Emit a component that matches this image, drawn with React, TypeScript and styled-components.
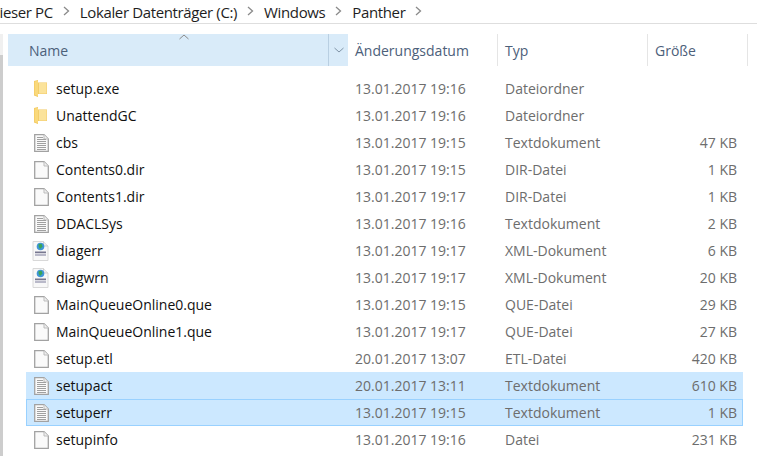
import React from 'react';
import styled, { createGlobalStyle } from 'styled-components';

const GlobalStyle = createGlobalStyle`
  html, body {
    margin: 0;
    padding: 0;
    background: #fff;
  }
  body {
    width: 757px;
    height: 456px;
    overflow: hidden;
    font-family: 'Open Sans', 'Noto Sans', sans-serif;
  }
`;

const Window = styled.div`
  width: 757px;
  height: 456px;
  overflow: hidden;
  display: flex;
  flex-direction: column;
`;

const Breadcrumb = styled.div`
  height: 23px;
  flex: none;
  border-bottom: 1px solid #dedede;
  display: flex;
  align-items: center;
  overflow: hidden;
  font-size: 15px;
  letter-spacing: -0.37px;
  color: #1e1e1e;
`;

const Crumb = styled.span<{ $offset?: number }>`
  white-space: nowrap;
  margin-left: ${(p) => p.$offset ?? 0}px;
`;

const Chevron = styled.svg`
  width: 7px;
  height: 10px;
  margin: 0 10px 2px 10px;
  flex: none;
`;

const Body = styled.div`
  flex: 1;
  display: flex;
  padding-top: 10px;
`;

const SideRail = styled.div`
  width: 3px;
  flex: none;
  margin-right: 5px;
  background: linear-gradient(#f0f0f0 0, #f0f0f0 21px, #cdcdcd 21px);
`;

const List = styled.div`
  flex: 1;
  min-width: 0;
`;

const HeaderRow = styled.div`
  height: 32px;
  display: flex;
  font-size: 14px;
  color: #4c607a;
`;

const NameHeader = styled.div`
  position: relative;
  width: 340px;
  flex: none;
  background: #d9ebf9;
  display: flex;
  align-items: center;
  padding-left: 21px;
  box-sizing: border-box;
`;

const SortCaret = styled.svg`
  position: absolute;
  left: 171px;
  top: 0;
  width: 10px;
  height: 6px;
`;

const DropZone = styled.div`
  position: absolute;
  right: 0;
  top: 0;
  bottom: 0;
  width: 19px;
  border-left: 1px solid #b9cfe2;
  display: flex;
  align-items: center;
  justify-content: center;
`;

const HeaderCell = styled.div<{ $width: number }>`
  width: ${(p) => p.$width}px;
  flex: none;
  box-sizing: border-box;
  padding-left: 7px;
  border-right: 1px solid #e5e5e5;
  display: flex;
  align-items: center;
`;

const Rows = styled.div`
  padding: 9px 0 0 18px;
`;

const Row = styled.div<{ $selected?: boolean; $focused?: boolean }>`
  height: 27px;
  width: 717px;
  box-sizing: border-box;
  display: flex;
  align-items: center;
  font-size: 14px;
  color: #6d6d6d;
  background: ${(p) => (p.$selected ? '#cce8ff' : 'transparent')};
  border: 1px solid ${(p) => (p.$focused ? '#99d1ff' : 'transparent')};
`;

const IconSlot = styled.div<{ $left: number }>`
  width: 29px;
  flex: none;
  padding-left: ${(p) => p.$left}px;
  box-sizing: border-box;
  display: flex;
  align-items: center;
`;

const NameCell = styled.div`
  width: 299px;
  flex: none;
  color: #101010;
`;

const DateCell = styled.div`
  width: 150px;
  flex: none;
`;

const TypeCell = styled.div`
  width: 130px;
  flex: none;
`;

const SizeCell = styled.div`
  width: 102px;
  flex: none;
  text-align: right;
`;

type Kind = 'folder' | 'text' | 'blank' | 'xml';

function FileIcon({ kind }: { kind: Kind }) {
  if (kind === 'folder') {
    return (
      <svg width="13" height="17" viewBox="0 0 13 17">
        <path d="M0 1 L4 0 V2.5 H13 V14 H4 V17 L0 15.5 Z" fill="#f1c75e" />
        <path d="M4.8 3 H12.6 V13.6 H4.8 Z" fill="#fbe39b" />
        <path d="M.6 1.6 L4 .8 V16 L.6 15 Z" fill="#fad97b" />
      </svg>
    );
  }
  if (kind === 'xml') {
    return (
      <svg width="17" height="20" viewBox="0 0 17 20">
        <path d="M1 .5 H11.5 L16 5 V19.5 H1 Z" fill="#f8f8f8" stroke="#d8d8d8" />
        <path d="M11.5 .5 V5 H16" fill="#ececec" stroke="#cfcfcf" />
        <circle cx="8.5" cy="5.5" r="3.8" fill="#3f95d8" />
        <path d="M6.5 3.2 L9.5 2.8 L10.6 5.6 L8 8 L6.8 5.8 Z" fill="#3aa655" />
        <rect x="3" y="10.5" width="11" height="1.5" fill="#77778f" />
        <rect x="3" y="12.5" width="11" height="2.5" fill="#b9b9c9" />
      </svg>
    );
  }
  return (
    <svg width="15" height="18" viewBox="0 0 15 18">
      <path d="M.7 .7 H10 L14.3 5 V17.3 H.7 Z" fill="#fafafa" stroke="#a2a2a2" strokeWidth="1.3" />
      <path d="M10 .7 V5 H14.3" fill="#efefef" stroke="#bdbdbd" />
      {kind === 'text' &&
        [3, 5, 7, 9, 11, 13, 15].map((y) => (
          <rect key={y} x="3" y={y} width={y === 3 ? 6 : 9} height="1" fill="#a0a0a0" />
        ))}
    </svg>
  );
}

type FileEntry = {
  name: string;
  date: string;
  type: string;
  size?: string;
  kind: Kind;
  selected?: boolean;
  focused?: boolean;
};

const files: FileEntry[] = [
  { name: 'setup.exe', date: '13.01.2017 19:16', type: 'Dateiordner', kind: 'folder' },
  { name: 'UnattendGC', date: '13.01.2017 19:16', type: 'Dateiordner', kind: 'folder' },
  { name: 'cbs', date: '13.01.2017 19:15', type: 'Textdokument', size: '47 KB', kind: 'text' },
  { name: 'Contents0.dir', date: '13.01.2017 19:15', type: 'DIR-Datei', size: '1 KB', kind: 'blank' },
  { name: 'Contents1.dir', date: '13.01.2017 19:17', type: 'DIR-Datei', size: '1 KB', kind: 'blank' },
  { name: 'DDACLSys', date: '13.01.2017 19:16', type: 'Textdokument', size: '2 KB', kind: 'text' },
  { name: 'diagerr', date: '13.01.2017 19:17', type: 'XML-Dokument', size: '6 KB', kind: 'xml' },
  { name: 'diagwrn', date: '13.01.2017 19:17', type: 'XML-Dokument', size: '20 KB', kind: 'xml' },
  { name: 'MainQueueOnline0.que', date: '13.01.2017 19:15', type: 'QUE-Datei', size: '29 KB', kind: 'blank' },
  { name: 'MainQueueOnline1.que', date: '13.01.2017 19:17', type: 'QUE-Datei', size: '27 KB', kind: 'blank' },
  { name: 'setup.etl', date: '20.01.2017 13:07', type: 'ETL-Datei', size: '420 KB', kind: 'blank' },
  { name: 'setupact', date: '20.01.2017 13:11', type: 'Textdokument', size: '610 KB', kind: 'text', selected: true },
  { name: 'setuperr', date: '13.01.2017 19:15', type: 'Textdokument', size: '1 KB', kind: 'text', selected: true, focused: true },
  { name: 'setupinfo', date: '13.01.2017 19:16', type: 'Datei', size: '231 KB', kind: 'blank' },
];

const crumbs = ['Lokaler Datenträger (C:)', 'Windows', 'Panther'];

function CrumbChevron() {
  return (
    <Chevron viewBox="0 0 7 10">
      <path d="M1 1 L5.5 5 L1 9" fill="none" stroke="#8a8a8a" strokeWidth="1.3" />
    </Chevron>
  );
}

export default function App() {
  return (
    <Window>
      <GlobalStyle />
      <Breadcrumb>
        <Crumb $offset={-11}>Dieser PC</Crumb>
        <CrumbChevron />
        {crumbs.map((c) => (
          <React.Fragment key={c}>
            <Crumb>{c}</Crumb>
            <CrumbChevron />
          </React.Fragment>
        ))}
      </Breadcrumb>
      <Body>
        <SideRail />
        <List>
          <HeaderRow>
            <NameHeader>
              Name
              <SortCaret viewBox="0 0 10 6">
                <path d="M.5 5 L5 1 L9.5 5" fill="none" stroke="#8c8c8c" />
              </SortCaret>
              <DropZone>
                <svg width="10" height="6" viewBox="0 0 10 6">
                  <path d="M.5 1 L5 5 L9.5 1" fill="none" stroke="#7f93a6" />
                </svg>
              </DropZone>
            </NameHeader>
            <HeaderCell $width={150}>Änderungsdatum</HeaderCell>
            <HeaderCell $width={150}>Typ</HeaderCell>
            <HeaderCell $width={100}>Größe</HeaderCell>
          </HeaderRow>
          <Rows>
            {files.map((f) => (
              <Row key={f.name} $selected={f.selected} $focused={f.focused}>
                <IconSlot $left={f.kind === 'xml' ? 5 : 7}>
                  <FileIcon kind={f.kind} />
                </IconSlot>
                <NameCell>{f.name}</NameCell>
                <DateCell>{f.date}</DateCell>
                <TypeCell>{f.type}</TypeCell>
                <SizeCell>{f.size}</SizeCell>
              </Row>
            ))}
          </Rows>
        </List>
      </Body>
    </Window>
  );
}
